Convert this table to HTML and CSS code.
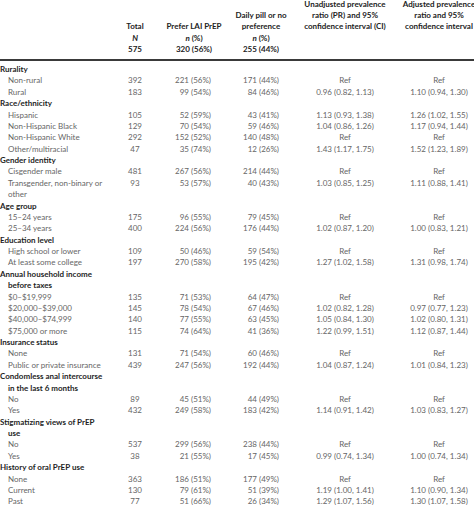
FILE: index.html
```html
<!DOCTYPE html>
<html lang="en">
<head>
<meta charset="utf-8">
<title>PrEP preference table</title>
<link rel="stylesheet" href="styles.css">
</head>
<body>
<table class="tbl">
  <colgroup>
    <col class="c-label"><col class="c-total"><col class="c-lai"><col class="c-daily"><col class="c-unadj"><col class="c-adj">
  </colgroup>
  <thead>
    <tr>
      <th class="h-label"></th>
      <th class="h-bot">Total<br><i>N</i><br>575</th>
      <th class="h-bot">Prefer LAI PrEP<br><i>n</i> (%)<br>320 (56%)</th>
      <th class="h-bot">Daily pill or no<br>preference<br><i>n</i> (%)<br>255 (44%)</th>
      <th class="h-top">Unadjusted prevalence<br>ratio (PR) and 95%<br>confidence interval (CI)</th>
      <th class="h-top h-adj">Adjusted prevalence<br>ratio and 95%<br>confidence interval</th>
    </tr>
  </thead>
  <tbody>
    <tr class="cat first"><td class="lbl">Rurality</td><td></td><td></td><td></td><td></td><td></td></tr>
    <tr><td class="item">Non-rural</td><td class="tot">392</td><td class="lai">221 (56%)</td><td class="daily">171 (44%)</td><td class="ci">Ref</td><td class="ci">Ref</td></tr>
    <tr><td class="item">Rural</td><td class="tot">183</td><td class="lai">99 (54%)</td><td class="daily">84 (46%)</td><td class="ci">0.96 (0.82, 1.13)</td><td class="ci">1.10 (0.94, 1.30)</td></tr>

    <tr class="cat"><td class="lbl">Race/ethnicity</td><td></td><td></td><td></td><td></td><td></td></tr>
    <tr><td class="item">Hispanic</td><td class="tot">105</td><td class="lai">52 (59%)</td><td class="daily">43 (41%)</td><td class="ci">1.13 (0.93, 1.38)</td><td class="ci">1.26 (1.02, 1.55)</td></tr>
    <tr><td class="item">Non-Hispanic Black</td><td class="tot">129</td><td class="lai">70 (54%)</td><td class="daily">59 (46%)</td><td class="ci">1.04 (0.86, 1.26)</td><td class="ci">1.17 (0.94, 1.44)</td></tr>
    <tr><td class="item">Non-Hispanic White</td><td class="tot">292</td><td class="lai">152 (52%)</td><td class="daily">140 (48%)</td><td class="ci">Ref</td><td class="ci">Ref</td></tr>
    <tr><td class="item">Other/multiracial</td><td class="tot">47</td><td class="lai">35 (74%)</td><td class="daily">12 (26%)</td><td class="ci">1.43 (1.17, 1.75)</td><td class="ci">1.52 (1.23, 1.89)</td></tr>

    <tr class="cat"><td class="lbl">Gender identity</td><td></td><td></td><td></td><td></td><td></td></tr>
    <tr><td class="item">Cisgender male</td><td class="tot">481</td><td class="lai">267 (56%)</td><td class="daily">214 (44%)</td><td class="ci">Ref</td><td class="ci">Ref</td></tr>
    <tr><td class="item">Transgender, non-binary or<br>other</td><td class="tot">93</td><td class="lai">53 (57%)</td><td class="daily">40 (43%)</td><td class="ci">1.03 (0.85, 1.25)</td><td class="ci">1.11 (0.88, 1.41)</td></tr>

    <tr class="cat"><td class="lbl">Age group</td><td></td><td></td><td></td><td></td><td></td></tr>
    <tr><td class="item">15–24 years</td><td class="tot">175</td><td class="lai">96 (55%)</td><td class="daily">79 (45%)</td><td class="ci">Ref</td><td class="ci">Ref</td></tr>
    <tr><td class="item">25–34 years</td><td class="tot">400</td><td class="lai">224 (56%)</td><td class="daily">176 (44%)</td><td class="ci">1.02 (0.87, 1.20)</td><td class="ci">1.00 (0.83, 1.21)</td></tr>

    <tr class="cat"><td class="lbl">Education level</td><td></td><td></td><td></td><td></td><td></td></tr>
    <tr><td class="item">High school or lower</td><td class="tot">109</td><td class="lai">50 (46%)</td><td class="daily">59 (54%)</td><td class="ci">Ref</td><td class="ci">Ref</td></tr>
    <tr><td class="item">At least some college</td><td class="tot">197</td><td class="lai">270 (58%)</td><td class="daily">195 (42%)</td><td class="ci">1.27 (1.02, 1.58)</td><td class="ci">1.31 (0.98, 1.74)</td></tr>

    <tr class="cat"><td class="lbl">Annual household income<br>before taxes</td><td></td><td></td><td></td><td></td><td></td></tr>
    <tr><td class="item">$0–$19,999</td><td class="tot">135</td><td class="lai">71 (53%)</td><td class="daily">64 (47%)</td><td class="ci">Ref</td><td class="ci">Ref</td></tr>
    <tr><td class="item">$20,000–$39,000</td><td class="tot">145</td><td class="lai">78 (54%)</td><td class="daily">67 (46%)</td><td class="ci">1.02 (0.82, 1.28)</td><td class="ci">0.97 (0.77, 1.23)</td></tr>
    <tr><td class="item">$40,000–$74,999</td><td class="tot">140</td><td class="lai">77 (55%)</td><td class="daily">63 (45%)</td><td class="ci">1.05 (0.84, 1.30)</td><td class="ci">1.02 (0.80, 1.31)</td></tr>
    <tr><td class="item">$75,000 or more</td><td class="tot">115</td><td class="lai">74 (64%)</td><td class="daily">41 (36%)</td><td class="ci">1.22 (0.99, 1.51)</td><td class="ci">1.12 (0.87, 1.44)</td></tr>

    <tr class="cat"><td class="lbl">Insurance status</td><td></td><td></td><td></td><td></td><td></td></tr>
    <tr><td class="item">None</td><td class="tot">131</td><td class="lai">71 (54%)</td><td class="daily">60 (46%)</td><td class="ci">Ref</td><td class="ci">Ref</td></tr>
    <tr><td class="item">Public or private insurance</td><td class="tot">439</td><td class="lai">247 (56%)</td><td class="daily">192 (44%)</td><td class="ci">1.04 (0.87, 1.24)</td><td class="ci">1.01 (0.84, 1.23)</td></tr>

    <tr class="cat"><td class="lbl">Condomless anal intercourse<br>in the last 6 months</td><td></td><td></td><td></td><td></td><td></td></tr>
    <tr><td class="item">No</td><td class="tot">89</td><td class="lai">45 (51%)</td><td class="daily">44 (49%)</td><td class="ci">Ref</td><td class="ci">Ref</td></tr>
    <tr><td class="item">Yes</td><td class="tot">432</td><td class="lai">249 (58%)</td><td class="daily">183 (42%)</td><td class="ci">1.14 (0.91, 1.42)</td><td class="ci">1.03 (0.83, 1.27)</td></tr>

    <tr class="cat"><td class="lbl">Stigmatizing views of PrEP<br>use</td><td></td><td></td><td></td><td></td><td></td></tr>
    <tr><td class="item">No</td><td class="tot">537</td><td class="lai">299 (56%)</td><td class="daily">238 (44%)</td><td class="ci">Ref</td><td class="ci">Ref</td></tr>
    <tr><td class="item">Yes</td><td class="tot">38</td><td class="lai">21 (55%)</td><td class="daily">17 (45%)</td><td class="ci">0.99 (0.74, 1.34)</td><td class="ci">1.00 (0.74, 1.34)</td></tr>

    <tr class="cat"><td class="lbl">History of oral PrEP use</td><td></td><td></td><td></td><td></td><td></td></tr>
    <tr><td class="item">None</td><td class="tot">363</td><td class="lai">186 (51%)</td><td class="daily">177 (49%)</td><td class="ci">Ref</td><td class="ci">Ref</td></tr>
    <tr><td class="item">Current</td><td class="tot">130</td><td class="lai">79 (61%)</td><td class="daily">51 (39%)</td><td class="ci">1.19 (1.00, 1.41)</td><td class="ci">1.10 (0.90, 1.34)</td></tr>
    <tr><td class="item">Past</td><td class="tot">77</td><td class="lai">51 (66%)</td><td class="daily">26 (34%)</td><td class="ci">1.29 (1.07, 1.56)</td><td class="ci">1.30 (1.07, 1.58)</td></tr>
  </tbody>
</table>
</body>
</html>
```

FILE: styles.css
```css
html, body {
  margin: 0;
  padding: 0;
  background: #ffffff;
  overflow: hidden;
}

body {
  font-family: Lato, "Open Sans", "DejaVu Sans", sans-serif;
  font-size: 8px;
  line-height: 11.37px;
  color: #666666;
}

.tbl {
  table-layout: fixed;
  width: 477px;
  border-collapse: collapse;
  border-spacing: 0;
  margin-top: -1.5px;
}

.c-label { width: 115px; }
.c-total { width: 40px; }
.c-lai   { width: 78px; }
.c-daily { width: 56px; }
.c-unadj { width: 112px; }
.c-adj   { width: 76px; }

.tbl th,
.tbl td {
  padding: 0;
  white-space: nowrap;
  vertical-align: top;
}

.tbl thead th {
  font-weight: 700;
  color: #222222;
  text-align: center;
  padding-bottom: 3px;
  border-bottom: 2px solid #3a3a3a;
  height: 57px;
}

.tbl thead th.h-bot { vertical-align: bottom; }
.tbl thead th.h-top { vertical-align: top; }
.tbl thead th.h-adj { overflow: visible; }

.tbl thead i { font-style: italic; }

.tbl tbody tr.first td { padding-top: 3.5px; }

.tbl td.lbl {
  font-weight: 700;
  color: #1e1e1e;
  padding-left: 8px;
  text-indent: -8px;
}

.tbl td.item {
  padding-left: 8px;
}

.tbl td.tot { text-align: center; }
.tbl td.lai { text-align: right; padding-right: 22px; }
.tbl td.daily { text-align: right; padding-right: 10px; }
.tbl td.ci { text-align: center; }
```
